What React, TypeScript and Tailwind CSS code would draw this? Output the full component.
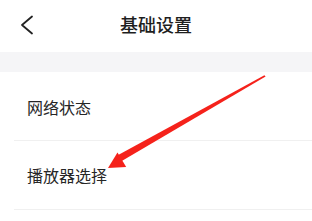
export default function App() {
  return (
    <div
      className="relative w-[312px] h-[221px] overflow-hidden bg-white"
      style={{ fontFamily: '"Noto Sans CJK SC", "Noto Sans", sans-serif' }}
    >
      {/* Header */}
      <div className="relative h-[52px] flex items-center justify-center">
        <svg className="absolute left-[18px] top-[14px]" width="18" height="22" viewBox="0 0 18 22">
          <path d="M14 2.5 L4 11 L14 19.5" fill="none" stroke="#222" strokeWidth="1.8" strokeLinecap="round" strokeLinejoin="round" />
        </svg>
        <span className="text-[18px] leading-none font-medium text-[#1e1e1e] -mt-[4px]">基础设置</span>
      </div>

      {/* Gap band */}
      <div className="h-[20px] bg-[#f5f5f7]" />

      {/* Rows */}
      <div className="pl-[14px]">
        <div className="h-[69px] flex items-center pl-[13px] border-b border-[#f0f0f0]">
          <span className="text-[16px] leading-none text-[#262626] mt-[1px]">网络状态</span>
        </div>
        <div className="h-[69px] flex items-center pl-[13px] border-b border-[#f0f0f0]">
          <span className="text-[16px] leading-none text-[#262626]">播放器选择</span>
        </div>
      </div>

      {/* Annotation arrow */}
      <svg className="absolute left-0 top-0 pointer-events-none" width="312" height="221" viewBox="0 0 312 221">
        <polygon points="265.6,76.6 264.4,75.2 118.2,155 121.8,161" fill="#f5221b" />
        <polygon points="108,168 117.5,152.5 126.2,167" fill="#f5221b" />
      </svg>
    </div>
  );
}
